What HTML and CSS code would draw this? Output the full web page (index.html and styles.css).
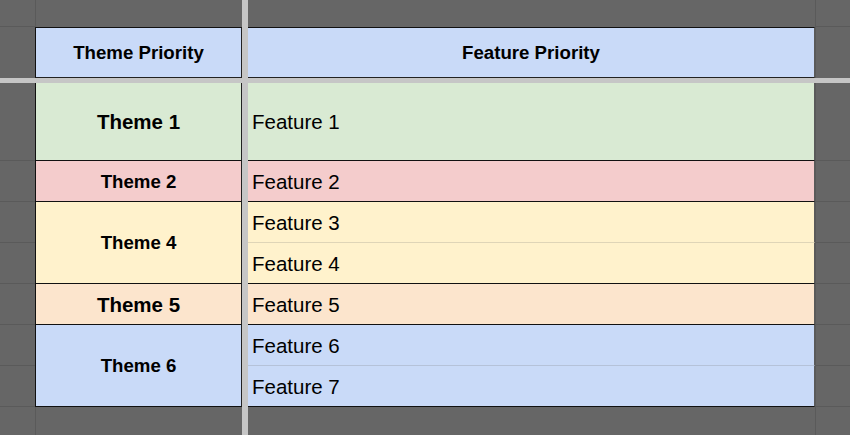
FILE: index.html
```html
<!DOCTYPE html>
<html>
<head>
<meta charset="utf-8">
<link rel="stylesheet" href="styles.css">
</head>
<body>
<div class="sheet">
  <!-- top margin row -->
  <div class="m r1 c1 gb"></div>
  <div class="m r1 c2 gl"></div>
  <div class="m r1 c5 gl gb"></div>

  <!-- header -->
  <div class="m r2 c1"></div>
  <div class="cell head r2 c2 t1">Theme Priority</div>
  <div class="cell head r2 c4 t2">Feature Priority</div>
  <div class="m r2 c5 gl"></div>

  <!-- left / right margins per row -->
  <div class="m r4 c1 gb"></div><div class="m r4 c5 gl gb"></div>
  <div class="m r5 c1 gb"></div><div class="m r5 c5 gl gb"></div>
  <div class="m r6 c1 gb"></div><div class="m r6 c5 gl gb"></div>
  <div class="m r7 c1 gb"></div><div class="m r7 c5 gl gb"></div>
  <div class="m r8 c1 gb"></div><div class="m r8 c5 gl gb"></div>
  <div class="m r9 c1 gb"></div><div class="m r9 c5 gl gb"></div>
  <div class="m r10 c1 gb"></div><div class="m r10 c5 gl gb"></div>

  <!-- themes -->
  <div class="cell theme green big r4 c2">Theme 1</div>
  <div class="cell theme red r5 c2">Theme 2</div>
  <div class="cell theme yellow r6-7 c2">Theme 4</div>
  <div class="cell theme orange big r8 c2">Theme 5</div>
  <div class="cell theme blue r9-10 c2">Theme 6</div>

  <!-- features -->
  <div class="cell feat green r4 c4 end">Feature 1</div>
  <div class="cell feat red r5 c4 end">Feature 2</div>
  <div class="cell feat yellow r6 c4 soft">Feature 3</div>
  <div class="cell feat yellow r7 c4 end">Feature 4</div>
  <div class="cell feat orange r8 c4 end">Feature 5</div>
  <div class="cell feat blue r9 c4 soft">Feature 6</div>
  <div class="cell feat blue r10 c4 end">Feature 7</div>

  <!-- bottom margin row -->
  <div class="m r11 c2 gl"></div>
  <div class="m r11 c5 gl"></div>

  <!-- frozen pane bars -->
  <div class="freeze-h"></div>
  <div class="freeze-v"></div>
</div>
</body>
</html>
```
FILE: styles.css
```css
html, body {
  margin: 0;
  padding: 0;
  background: #666666;
}

body {
  width: 850px;
  height: 435px;
  overflow: hidden;
  font-family: "Liberation Sans", Arial, sans-serif;
  color: #000;
}

.sheet {
  display: grid;
  width: 850px;
  height: 435px;
  grid-template-columns: 35px 207px 6px 567px 35px;
  grid-template-rows: 27px 51px 5px 78px 41px 41px 41px 41px 41px 41px 1fr;
}

/* grid placement */
.c1 { grid-column: 1; }
.c2 { grid-column: 2; }
.c4 { grid-column: 4; }
.c5 { grid-column: 5; }
.r1 { grid-row: 1; }
.r2 { grid-row: 2; }
.r4 { grid-row: 4; }
.r5 { grid-row: 5; }
.r6 { grid-row: 6; }
.r7 { grid-row: 7; }
.r8 { grid-row: 8; }
.r9 { grid-row: 9; }
.r10 { grid-row: 10; }
.r11 { grid-row: 11; }
.r6-7 { grid-row: 6 / 8; }
.r9-10 { grid-row: 9 / 11; }

/* margin cells with faint gridlines */
.m { box-sizing: border-box; }
.gb { border-bottom: 1px solid #5a5a5a; }
.gl { border-left: 1px solid #5a5a5a; }

/* table cells */
.cell {
  box-sizing: border-box;
  display: flex;
  align-items: center;
  white-space: nowrap;
  padding-top: 1px;
}

.head {
  background: #c9daf8;
  border-top: 1px solid #111;
  border-bottom: 1px solid #222;
  font-weight: bold;
  font-size: 18.67px;
  justify-content: center;
}
.head.t1 {
  border-left: 1px solid #111;
  border-right: 1px solid #222;
}
.head.t2 {
  border-right: 1px solid #5a5a5a;
}

.theme {
  justify-content: center;
  font-weight: bold;
  font-size: 18.67px;
  border-left: 1px solid #111;
  border-right: 1px solid #222;
  border-bottom: 1px solid #111;
}
.theme.big { font-size: 20.5px; }

.feat {
  font-size: 20.5px;
  padding-left: 4px;
  border-right: 1px solid #5a5a5a;
}
.feat.end { border-bottom: 1px solid #111; }
.feat.soft { border-bottom: 1px solid rgba(110, 110, 110, 0.22); }

.green { background: #d9ead3; }
.red { background: #f4cccc; }
.yellow { background: #fff2cc; }
.orange { background: #fce5cd; }
.blue { background: #c9daf8; }

/* frozen pane dividers */
.freeze-h {
  grid-row: 3;
  grid-column: 1 / -1;
  background: #c6c6c6;
}
.freeze-v {
  grid-row: 1 / -1;
  grid-column: 3;
  background: #c6c6c6;
}
```
